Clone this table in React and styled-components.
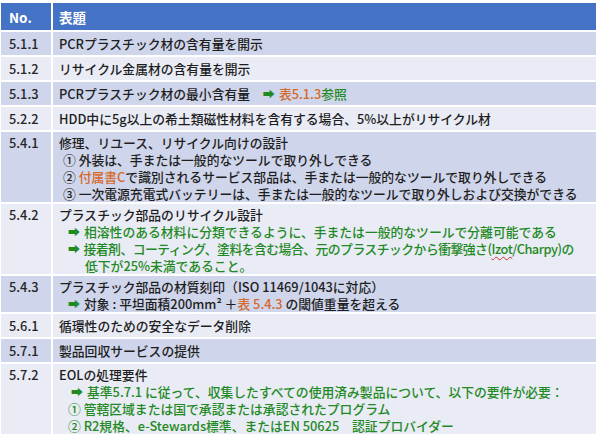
import React from 'react';
import styled, { createGlobalStyle } from 'styled-components';

const Global = createGlobalStyle`
  body {
    margin: 0;
    background: #ffffff;
    font-family: "Noto Sans CJK JP", "Noto Sans", sans-serif;
  }
`;

const Page = styled.div`
  width: 600px;
  height: 441px;
  padding: 3px 4px 0 1px;
  box-sizing: border-box;
  overflow: hidden;
`;

const Table = styled.div`
  display: flex;
  flex-direction: column;
  gap: 2px;
`;

const Row = styled.div`
  display: grid;
  grid-template-columns: 50px 1fr;
  column-gap: 2px;
`;

const HeadCell = styled.div`
  background: #4472c4;
  color: #ffffff;
  font-weight: 700;
  font-size: 13.5px;
  height: 27px;
  display: flex;
  align-items: center;
  padding-left: ${p => (p.$no ? '8px' : '6px')};
`;

const NoCell = styled.div`
  background: ${p => (p.$dark ? '#cfd5ea' : '#e9ebf5')};
  color: #262626;
  font-size: 12.8px;
  font-weight: 500;
  line-height: 17px;
  padding: ${p => (p.$multi ? '2px 0 0 8px' : '3px 0 3px 8px')};
`;

const TextCell = styled.div`
  background: ${p => (p.$dark ? '#cfd5ea' : '#e9ebf5')};
  color: #1e1e1e;
  font-size: 12.8px;
  font-weight: 500;
  line-height: 17px;
  white-space: nowrap;
  overflow: hidden;
  padding: ${p => (p.$multi ? '2px 0 0 6px' : '3px 0 3px 6px')};
`;

const Line = styled.div`
  height: 17px;
  padding-left: ${p => p.$indent || 0}px;
  color: ${p => (p.$green ? '#1f8a24' : 'inherit')};
  letter-spacing: ${p => (p.$tight ? '-0.5px' : 'normal')};
`;

const Orange = styled.span`
  color: #d4692a;
`;

const Green = styled.span`
  color: #1f8a24;
`;

const Arrow = styled.span`
  color: #1f8a24;
  font-size: 12px;
  line-height: 0;
  margin-right: 4px;
`;

const Spell = styled.span`
  text-decoration: underline wavy #d03030;
  text-decoration-thickness: 1px;
  text-underline-offset: 2px;
`;

const rows = [
  { no: '5.1.1', lines: [<Line key="a">PCRプラスチック材の含有量を開示</Line>] },
  { no: '5.1.2', lines: [<Line key="a">リサイクル金属材の含有量を開示</Line>] },
  {
    no: '5.1.3',
    lines: [
      <Line key="a">
        PCRプラスチック材の最小含有量　<Arrow>➡</Arrow>
        <Orange>表5.1.3</Orange>
        <Green>参照</Green>
      </Line>,
    ],
  },
  { no: '5.2.2', lines: [<Line key="a">HDD中に5g以上の希土類磁性材料を含有する場合、5%以上がリサイクル材</Line>] },
  {
    no: '5.4.1',
    multi: true,
    lines: [
      <Line key="a">修理、リユース、リサイクル向けの設計</Line>,
      <Line key="b" $indent={4}>① 外装は、手または一般的なツールで取り外しできる</Line>,
      <Line key="c" $indent={4}>
        ② <Orange>付属書C</Orange>で識別されるサービス部品は、手または一般的なツールで取り外しできる
      </Line>,
      <Line key="d" $indent={4}>③ 一次電源充電式バッテリーは、手または一般的なツールで取り外しおよび交換ができる</Line>,
    ],
  },
  {
    no: '5.4.2',
    multi: true,
    lines: [
      <Line key="a">プラスチック部品のリサイクル設計</Line>,
      <Line key="b" $indent={9} $green>
        <Arrow>➡</Arrow>相溶性のある材料に分類できるように、手または一般的なツールで分離可能である
      </Line>,
      <Line key="c" $indent={9} $green $tight>
        <Arrow>➡</Arrow>接着剤、コーティング、塗料を含む場合、元のプラスチックから衝撃強さ(<Spell>Izot</Spell>/Charpy)の
      </Line>,
      <Line key="d" $indent={26} $green>低下が25%未満であること。</Line>,
    ],
  },
  {
    no: '5.4.3',
    multi: true,
    lines: [
      <Line key="a">プラスチック部品の材質刻印（ISO 11469/1043に対応）</Line>,
      <Line key="b" $indent={9}>
        <Arrow>➡</Arrow>対象 : 平坦面積200mm² ＋<Orange>表 5.4.3</Orange> の閾値重量を超える
      </Line>,
    ],
  },
  { no: '5.6.1', lines: [<Line key="a">循環性のための安全なデータ削除</Line>] },
  { no: '5.7.1', lines: [<Line key="a">製品回収サービスの提供</Line>] },
  {
    no: '5.7.2',
    multi: true,
    lines: [
      <Line key="a">EOLの処理要件</Line>,
      <Line key="b" $indent={12} $green>
        <Arrow>➡</Arrow>基準5.7.1 に従って、収集したすべての使用済み製品について、以下の要件が必要：
      </Line>,
      <Line key="c" $indent={9} $green>① 管轄区域または国で承認または承認されたプログラム</Line>,
      <Line key="d" $indent={9} $green>② R2規格、e-Stewards標準、またはEN 50625　認証プロバイダー</Line>,
    ],
  },
];

export default function App() {
  return (
    <Page>
      <Global />
      <Table>
        <Row>
          <HeadCell $no>No.</HeadCell>
          <HeadCell>表題</HeadCell>
        </Row>
        {rows.map((r, i) => (
          <Row key={r.no}>
            <NoCell $dark={i % 2 === 0} $multi={r.multi}>{r.no}</NoCell>
            <TextCell $dark={i % 2 === 0} $multi={r.multi}>{r.lines}</TextCell>
          </Row>
        ))}
      </Table>
    </Page>
  );
}
